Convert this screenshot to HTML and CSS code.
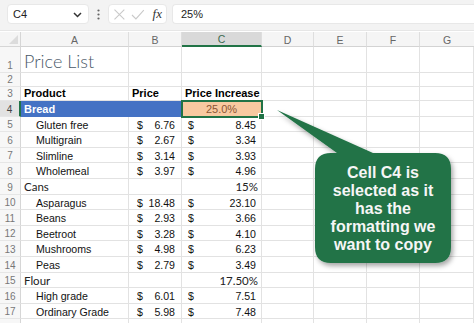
FILE: index.html
```html
<!DOCTYPE html>
<html>
<head>
<meta charset="utf-8">
<link rel="stylesheet" href="styles.css">
</head>
<body>
<div class="app">
  <div class="fbar">
    <div class="namebox">
      <span>C4</span>
      <svg class="chev" width="9" height="6" viewBox="0 0 9 6"><path d="M1 1 L4.5 4.5 L8 1" fill="none" stroke="#333" stroke-width="1.5"/></svg>
    </div>
    <svg class="dots" width="3" height="11" viewBox="0 0 3 11"><circle cx="1.5" cy="1.5" r="1.1" fill="#666"/><circle cx="1.5" cy="5.5" r="1.1" fill="#666"/><circle cx="1.5" cy="9.5" r="1.1" fill="#666"/></svg>
    <div class="fnbox">
      <svg width="13" height="13" viewBox="0 0 13 13"><path d="M1.5 1.5 L11.5 11.5 M11.5 1.5 L1.5 11.5" stroke="#c9c9c9" stroke-width="1.1"/></svg>
      <svg width="14" height="13" viewBox="0 0 14 13"><path d="M1 7 L5 11 L13 2" fill="none" stroke="#c9c9c9" stroke-width="1.1"/></svg>
      <span class="fx">fx</span>
    </div>
    <div class="input">25%</div>
  </div>

  <div class="sheet">
    <div class="row hdr">
      <div class="rh corner"><span class="tri"></span></div>
      <div class="ch">A</div><div class="ch">B</div><div class="ch sel">C</div><div class="ch">D</div><div class="ch">E</div><div class="ch">F</div><div class="ch last">G</div>
    </div>

    <div class="row r1">
      <div class="rh">1</div>
      <div class="c title">Price List</div><div class="c"></div><div class="c"></div><div class="c"></div><div class="c"></div><div class="c"></div><div class="c"></div>
    </div>
    <div class="row r2">
      <div class="rh">2</div>
      <div class="c"></div><div class="c"></div><div class="c"></div><div class="c"></div><div class="c"></div><div class="c"></div><div class="c"></div>
    </div>
    <div class="row r3">
      <div class="rh">3</div>
      <div class="c b">Product</div><div class="c b">Price</div><div class="c b">Price Increase</div><div class="c"></div><div class="c"></div><div class="c"></div><div class="c"></div>
    </div>
    <div class="row">
      <div class="rh selr">4</div>
      <div class="c b blue span2">Bread</div><div class="c orange">25.0%</div><div class="c"></div><div class="c"></div><div class="c"></div><div class="c"></div>
    </div>
    <div class="row">
      <div class="rh">5</div>
      <div class="c ind">Gluten free</div><div class="c acc pb"><span>$</span><span>6.76</span></div><div class="c acc pc"><span>$</span><span>8.45</span></div><div class="c"></div><div class="c"></div><div class="c"></div><div class="c"></div>
    </div>
    <div class="row">
      <div class="rh">6</div>
      <div class="c ind">Multigrain</div><div class="c acc pb"><span>$</span><span>2.67</span></div><div class="c acc pc"><span>$</span><span>3.34</span></div><div class="c"></div><div class="c"></div><div class="c"></div><div class="c"></div>
    </div>
    <div class="row">
      <div class="rh">7</div>
      <div class="c ind">Slimline</div><div class="c acc pb"><span>$</span><span>3.14</span></div><div class="c acc pc"><span>$</span><span>3.93</span></div><div class="c"></div><div class="c"></div><div class="c"></div><div class="c"></div>
    </div>
    <div class="row">
      <div class="rh">8</div>
      <div class="c ind">Wholemeal</div><div class="c acc pb"><span>$</span><span>3.97</span></div><div class="c acc pc"><span>$</span><span>4.96</span></div><div class="c"></div><div class="c"></div><div class="c"></div><div class="c"></div>
    </div>
    <div class="row">
      <div class="rh">9</div>
      <div class="c cat">Cans</div><div class="c"></div><div class="c cat right">15%</div><div class="c"></div><div class="c"></div><div class="c"></div><div class="c"></div>
    </div>
    <div class="row">
      <div class="rh">10</div>
      <div class="c ind">Asparagus</div><div class="c acc pb"><span>$</span><span>18.48</span></div><div class="c acc pc"><span>$</span><span>23.10</span></div><div class="c"></div><div class="c"></div><div class="c"></div><div class="c"></div>
    </div>
    <div class="row">
      <div class="rh">11</div>
      <div class="c ind">Beans</div><div class="c acc pb"><span>$</span><span>2.93</span></div><div class="c acc pc"><span>$</span><span>3.66</span></div><div class="c"></div><div class="c"></div><div class="c"></div><div class="c"></div>
    </div>
    <div class="row">
      <div class="rh">12</div>
      <div class="c ind">Beetroot</div><div class="c acc pb"><span>$</span><span>3.28</span></div><div class="c acc pc"><span>$</span><span>4.10</span></div><div class="c"></div><div class="c"></div><div class="c"></div><div class="c"></div>
    </div>
    <div class="row">
      <div class="rh">13</div>
      <div class="c ind">Mushrooms</div><div class="c acc pb"><span>$</span><span>4.98</span></div><div class="c acc pc"><span>$</span><span>6.23</span></div><div class="c"></div><div class="c"></div><div class="c"></div><div class="c"></div>
    </div>
    <div class="row">
      <div class="rh">14</div>
      <div class="c ind">Peas</div><div class="c acc pb"><span>$</span><span>2.79</span></div><div class="c acc pc"><span>$</span><span>3.49</span></div><div class="c"></div><div class="c"></div><div class="c"></div><div class="c"></div>
    </div>
    <div class="row">
      <div class="rh">15</div>
      <div class="c cat">Flour</div><div class="c"></div><div class="c cat right">17.50%</div><div class="c"></div><div class="c"></div><div class="c"></div><div class="c"></div>
    </div>
    <div class="row">
      <div class="rh">16</div>
      <div class="c ind">High grade</div><div class="c acc pb"><span>$</span><span>6.01</span></div><div class="c acc pc"><span>$</span><span>7.51</span></div><div class="c"></div><div class="c"></div><div class="c"></div><div class="c"></div>
    </div>
    <div class="row">
      <div class="rh">17</div>
      <div class="c ind">Ordinary Grade</div><div class="c acc pb"><span>$</span><span>5.98</span></div><div class="c acc pc"><span>$</span><span>7.48</span></div><div class="c"></div><div class="c"></div><div class="c"></div><div class="c"></div>
    </div>
    <div class="row">
      <div class="rh"></div>
      <div class="c"></div><div class="c"></div><div class="c"></div><div class="c"></div><div class="c"></div><div class="c"></div><div class="c"></div>
    </div>
  </div>

  <div class="callout">
    <svg class="bubble" width="474" height="323" viewBox="0 0 474 323">
      <defs>
        <filter id="sh" x="-20%" y="-20%" width="140%" height="140%">
          <feDropShadow dx="2" dy="3" stdDeviation="2.5" flood-color="#000" flood-opacity="0.35"/>
        </filter>
      </defs>
      <path filter="url(#sh)" fill="#217346" d="M277 110 L337 153 L331 153 Q315 153 315 169 L315 247 Q315 263 331 263 L435 263 Q451 263 451 247 L451 169 Q451 153 435 153 L373 153 Z"/>
    </svg>
    <div class="ctext">Cell C4 is<br>selected as it<br>has the<br>formatting we<br>want to copy</div>
  </div>
</div>
</body>
</html>
```
FILE: styles.css
```css
* { box-sizing: border-box; }
html, body { margin: 0; padding: 0; background: #fff; }
body { width: 474px; height: 323px; overflow: hidden; font-family: "Liberation Sans", Arial, sans-serif; color: #000; }
.app { position: relative; width: 474px; height: 323px; overflow: hidden; }

.fbar { height: 31px; background: #f3f3f3; display: flex; align-items: center; padding: 0 0 2px 7px; gap: 0; border-bottom: 1px solid #e6e6e6; }
.namebox { width: 82px; height: 20px; background: #fff; border-radius: 4px; border: 1px solid #e8e8e8; display: flex; align-items: center; justify-content: space-between; padding: 0 6px 0 5px; font-size: 11px; color: #222; }
.chev { margin-top: 1px; }
.dots { margin: 0 8px 0 8px; }
.fnbox { width: 59px; height: 20px; background: #fff; border-radius: 4px; border: 1px solid #e8e8e8; display: flex; align-items: center; gap: 5px; padding: 0 4px 0 4px; }
.fx { font-family: "Liberation Serif", "Times New Roman", serif; font-style: italic; font-size: 13px; color: #333; margin-left: 3px; }
.input { flex: 1; height: 20px; margin-left: 5px; background: #fff; border-radius: 4px 0 0 4px; border: 1px solid #e8e8e8; border-right: none; font-size: 11px; color: #222; display: flex; align-items: center; padding-left: 8px; }

.sheet { margin-top: 1px; }
.row { display: grid; grid-template-columns: 21px 108px 53px 80px 52px 53px 53px 54px; height: 15.6px; }
.row.hdr { height: 15px; background: #f5f5f5; }
.row.r1 { height: 26px; }
.row.r2 { height: 14px; }
.row.r3 { height: 14px; }

.rh { background: #f7f7f7; border-right: 1px solid #d6d6d6; border-bottom: 1px solid #e6e6e6; color: #777; font-size: 10px; display: flex; align-items: flex-end; justify-content: center; padding-bottom: 1px; line-height: 1; }
.rh.selr { background: #e2e2e2; color: #444; border-right: 2px solid #217346; }
.corner { position: relative; background: #f5f5f5; border-bottom: 1px solid #d6d6d6; }
.tri { position: absolute; right: 2px; bottom: 2px; width: 0; height: 0; border-left: 9px solid transparent; border-bottom: 9px solid #dcdcdc; }
.ch { border-right: 1px solid #dedede; border-bottom: 1px solid #d3d3d3; color: #666; font-size: 10.5px; display: flex; align-items: center; justify-content: center; padding-top: 1px; }
.ch.sel { background: #d9d9d9; border-bottom: 2px solid #217346; color: #3c6b50; }
.ch.last { border-right: none; }

.c { border-right: 1px solid #e2e2e2; border-bottom: 1px solid #e2e2e2; font-size: 11px; display: flex; align-items: flex-end; padding: 0 3px 1px 3px; white-space: nowrap; line-height: 1; }
.title { font-family: Lato, "Liberation Sans", sans-serif; font-weight: 300; font-size: 18px; color: #4a5868; padding-bottom: 2px; }
.b { font-weight: bold; }
.span2 { grid-column: span 2; }
.blue { background: #4472c4; color: #fff; border-right-color: #4472c4; border-bottom-color: #4472c4; }
.orange { background: #f8c9a0; color: #8a5534; justify-content: center; outline: 2px solid #217346; outline-offset: -1px; position: relative; z-index: 1; }
.orange::after { content: ""; position: absolute; right: -4px; bottom: -4px; width: 5px; height: 5px; background: #217346; border: 1px solid #fff; }
.ind { padding-left: 15px; font-size: 10.6px; color: #111; }
.cat { font-family: Lato, "Liberation Sans", sans-serif; font-size: 11.5px; color: #222; }
.right { justify-content: flex-end; padding-right: 3px; }
.acc { justify-content: space-between; font-size: 10.6px; color: #111; }
.pb { padding-left: 8px; padding-right: 6px; }
.pc { padding-left: 6px; padding-right: 5px; }

.callout { position: absolute; left: 0; top: 0; width: 474px; height: 323px; pointer-events: none; }
.bubble { position: absolute; left: 0; top: 0; }
.ctext { position: absolute; left: 315px; top: 164px; width: 136px; text-align: center; color: #f6f6f6; font-weight: bold; font-size: 16px; line-height: 18px; }
```
